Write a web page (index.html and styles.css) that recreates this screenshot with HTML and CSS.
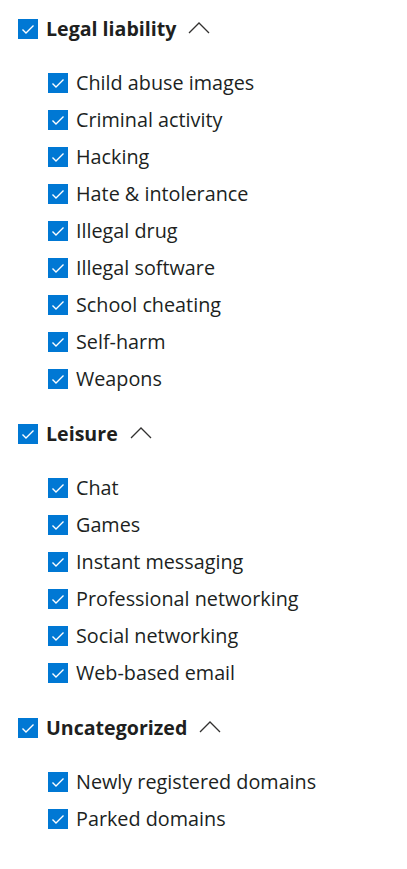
FILE: index.html
```html
<!DOCTYPE html>
<html>
<head>
<meta charset="utf-8">
<link rel="stylesheet" href="styles.css">
</head>
<body>
<div class="page">
  <section class="group">
    <div class="head">
      <span class="cb"><svg viewBox="0 0 20 20"><path d="M4.5 10.5 L8 14 L15.5 6.5"/></svg></span>
      <span class="head-label">Legal liability</span>
      <svg class="chev" viewBox="0 0 22 12"><path d="M1 11 L11 1 L21 11"/></svg>
    </div>
    <ul class="items">
      <li><span class="cb"><svg viewBox="0 0 20 20"><path d="M4.5 10.5 L8 14 L15.5 6.5"/></svg></span>Child abuse images</li>
      <li><span class="cb"><svg viewBox="0 0 20 20"><path d="M4.5 10.5 L8 14 L15.5 6.5"/></svg></span>Criminal activity</li>
      <li><span class="cb"><svg viewBox="0 0 20 20"><path d="M4.5 10.5 L8 14 L15.5 6.5"/></svg></span>Hacking</li>
      <li><span class="cb"><svg viewBox="0 0 20 20"><path d="M4.5 10.5 L8 14 L15.5 6.5"/></svg></span>Hate &amp; intolerance</li>
      <li><span class="cb"><svg viewBox="0 0 20 20"><path d="M4.5 10.5 L8 14 L15.5 6.5"/></svg></span>Illegal drug</li>
      <li><span class="cb"><svg viewBox="0 0 20 20"><path d="M4.5 10.5 L8 14 L15.5 6.5"/></svg></span>Illegal software</li>
      <li><span class="cb"><svg viewBox="0 0 20 20"><path d="M4.5 10.5 L8 14 L15.5 6.5"/></svg></span>School cheating</li>
      <li><span class="cb"><svg viewBox="0 0 20 20"><path d="M4.5 10.5 L8 14 L15.5 6.5"/></svg></span>Self-harm</li>
      <li><span class="cb"><svg viewBox="0 0 20 20"><path d="M4.5 10.5 L8 14 L15.5 6.5"/></svg></span>Weapons</li>
    </ul>
  </section>
  <section class="group">
    <div class="head">
      <span class="cb"><svg viewBox="0 0 20 20"><path d="M4.5 10.5 L8 14 L15.5 6.5"/></svg></span>
      <span class="head-label">Leisure</span>
      <svg class="chev" viewBox="0 0 22 12"><path d="M1 11 L11 1 L21 11"/></svg>
    </div>
    <ul class="items">
      <li><span class="cb"><svg viewBox="0 0 20 20"><path d="M4.5 10.5 L8 14 L15.5 6.5"/></svg></span>Chat</li>
      <li><span class="cb"><svg viewBox="0 0 20 20"><path d="M4.5 10.5 L8 14 L15.5 6.5"/></svg></span>Games</li>
      <li><span class="cb"><svg viewBox="0 0 20 20"><path d="M4.5 10.5 L8 14 L15.5 6.5"/></svg></span>Instant messaging</li>
      <li><span class="cb"><svg viewBox="0 0 20 20"><path d="M4.5 10.5 L8 14 L15.5 6.5"/></svg></span>Professional networking</li>
      <li><span class="cb"><svg viewBox="0 0 20 20"><path d="M4.5 10.5 L8 14 L15.5 6.5"/></svg></span>Social networking</li>
      <li><span class="cb"><svg viewBox="0 0 20 20"><path d="M4.5 10.5 L8 14 L15.5 6.5"/></svg></span>Web-based email</li>
    </ul>
  </section>
  <section class="group">
    <div class="head">
      <span class="cb"><svg viewBox="0 0 20 20"><path d="M4.5 10.5 L8 14 L15.5 6.5"/></svg></span>
      <span class="head-label">Uncategorized</span>
      <svg class="chev" viewBox="0 0 22 12"><path d="M1 11 L11 1 L21 11"/></svg>
    </div>
    <ul class="items">
      <li><span class="cb"><svg viewBox="0 0 20 20"><path d="M4.5 10.5 L8 14 L15.5 6.5"/></svg></span>Newly registered domains</li>
      <li><span class="cb"><svg viewBox="0 0 20 20"><path d="M4.5 10.5 L8 14 L15.5 6.5"/></svg></span>Parked domains</li>
    </ul>
  </section>
</div>
</body>
</html>
```
FILE: styles.css
```css
html, body {
  margin: 0;
  padding: 0;
  background: #ffffff;
}
.page {
  padding: 19px 0 0 18px;
  display: flex;
  flex-direction: column;
  gap: 35px;
  font-family: "Open Sans", "Noto Sans", sans-serif;
  color: #201f1e;
}
.group {
  display: flex;
  flex-direction: column;
}
.head {
  display: flex;
  align-items: center;
  height: 20px;
  margin-bottom: 34px;
}
.head-label {
  font-size: 19.6px;
  font-weight: 700;
  margin-left: 8px;
  line-height: 20px;
}
.chev {
  width: 22px;
  height: 12px;
  margin-left: 12px;
  margin-top: -2px;
}
.chev path {
  fill: none;
  stroke: #323130;
  stroke-width: 1.3;
}
.items {
  list-style: none;
  margin: 0;
  padding: 0 0 0 30px;
  display: flex;
  flex-direction: column;
  gap: 17px;
}
.items li {
  display: flex;
  align-items: center;
  height: 20px;
  font-size: 19.8px;
  line-height: 20px;
}
.items li .cb {
  margin-right: 8px;
}
.cb {
  width: 20px;
  height: 20px;
  background: #0078d4;
  flex: none;
  display: block;
}
.cb svg {
  width: 20px;
  height: 20px;
  display: block;
}
.cb path {
  fill: none;
  stroke: #ffffff;
  stroke-width: 1.4;
}
```
